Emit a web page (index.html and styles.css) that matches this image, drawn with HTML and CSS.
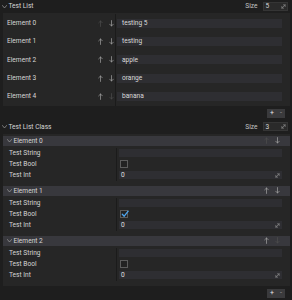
FILE: index.html
```html
<!DOCTYPE html>
<html lang="en">
<head>
    <meta charset="UTF-8">
    <title>Inspector - Test List</title>
    <link rel="stylesheet" href="styles.css">
</head>
<body>
    <div class="section-head">
        <svg class="chev" viewBox="0 0 6 4"><polyline points="0.5,0.5 3,3.5 5.5,0.5"/></svg>
        <span class="title">Test List</span>
        <span class="size-label">Size</span>
        <div class="size-box">
            <span>5</span>
            <svg class="resize" viewBox="0 0 6 6"><path d="M1 5 L5 1 M2.9 1 H5 V3.1 M1 2.9 V5 H3.1"/></svg>
        </div>
    </div>

    <div class="panel list">
        <div class="row">
            <div class="label"><span>Element 0</span>
                <span class="arrows">
                    <svg class="arrow dim" viewBox="0 0 6 8"><path d="M3 7.5 V1 M0.8 3.2 L3 1 L5.2 3.2"/></svg>
                    <svg class="arrow" viewBox="0 0 6 8"><path d="M3 0.5 V7 M0.8 4.8 L3 7 L5.2 4.8"/></svg>
                </span>
            </div>
            <div class="value"><div class="field">testing 5</div></div>
        </div>
        <div class="row">
            <div class="label"><span>Element 1</span>
                <span class="arrows">
                    <svg class="arrow" viewBox="0 0 6 8"><path d="M3 7.5 V1 M0.8 3.2 L3 1 L5.2 3.2"/></svg>
                    <svg class="arrow" viewBox="0 0 6 8"><path d="M3 0.5 V7 M0.8 4.8 L3 7 L5.2 4.8"/></svg>
                </span>
            </div>
            <div class="value"><div class="field">testing</div></div>
        </div>
        <div class="row">
            <div class="label"><span>Element 2</span>
                <span class="arrows">
                    <svg class="arrow" viewBox="0 0 6 8"><path d="M3 7.5 V1 M0.8 3.2 L3 1 L5.2 3.2"/></svg>
                    <svg class="arrow" viewBox="0 0 6 8"><path d="M3 0.5 V7 M0.8 4.8 L3 7 L5.2 4.8"/></svg>
                </span>
            </div>
            <div class="value"><div class="field">apple</div></div>
        </div>
        <div class="row">
            <div class="label"><span>Element 3</span>
                <span class="arrows">
                    <svg class="arrow" viewBox="0 0 6 8"><path d="M3 7.5 V1 M0.8 3.2 L3 1 L5.2 3.2"/></svg>
                    <svg class="arrow" viewBox="0 0 6 8"><path d="M3 0.5 V7 M0.8 4.8 L3 7 L5.2 4.8"/></svg>
                </span>
            </div>
            <div class="value"><div class="field">orange</div></div>
        </div>
        <div class="row">
            <div class="label"><span>Element 4</span>
                <span class="arrows">
                    <svg class="arrow" viewBox="0 0 6 8"><path d="M3 7.5 V1 M0.8 3.2 L3 1 L5.2 3.2"/></svg>
                    <svg class="arrow dim" viewBox="0 0 6 8"><path d="M3 0.5 V7 M0.8 4.8 L3 7 L5.2 4.8"/></svg>
                </span>
            </div>
            <div class="value"><div class="field">banana</div></div>
        </div>
    </div>
    <div class="footer"><div class="addrem"><span class="plus">+</span><span class="minus">-</span></div></div>

    <div class="section-head tall">
        <svg class="chev" viewBox="0 0 6 4"><polyline points="0.5,0.5 3,3.5 5.5,0.5"/></svg>
        <span class="title">Test List Class</span>
        <span class="size-label">Size</span>
        <div class="size-box">
            <span>3</span>
            <svg class="resize" viewBox="0 0 6 6"><path d="M1 5 L5 1 M2.9 1 H5 V3.1 M1 2.9 V5 H3.1"/></svg>
        </div>
    </div>

    <div class="panel classes">
        <div class="elem">
            <div class="elem-head">
                <svg class="chev" viewBox="0 0 6 4"><polyline points="0.5,0.5 3,3.5 5.5,0.5"/></svg>
                <span>Element 0</span>
                <span class="arrows">
                    <svg class="arrow dim" viewBox="0 0 6 8"><path d="M3 7.5 V1 M0.8 3.2 L3 1 L5.2 3.2"/></svg>
                    <svg class="arrow" viewBox="0 0 6 8"><path d="M3 0.5 V7 M0.8 4.8 L3 7 L5.2 4.8"/></svg>
                </span>
            </div>
            <div class="elem-body">
                <div class="prop"><div class="plabel">Test String</div><div class="pval"><div class="field"></div></div></div>
                <div class="prop"><div class="plabel">Test Bool</div><div class="pval"><span class="check"></span></div></div>
                <div class="prop"><div class="plabel">Test Int</div><div class="pval"><div class="field int"><span>0</span><svg class="resize" viewBox="0 0 6 6"><path d="M1 5 L5 1 M2.9 1 H5 V3.1 M1 2.9 V5 H3.1"/></svg></div></div></div>
            </div>
        </div>
        <div class="elem">
            <div class="elem-head">
                <svg class="chev" viewBox="0 0 6 4"><polyline points="0.5,0.5 3,3.5 5.5,0.5"/></svg>
                <span>Element 1</span>
                <span class="arrows">
                    <svg class="arrow" viewBox="0 0 6 8"><path d="M3 7.5 V1 M0.8 3.2 L3 1 L5.2 3.2"/></svg>
                    <svg class="arrow" viewBox="0 0 6 8"><path d="M3 0.5 V7 M0.8 4.8 L3 7 L5.2 4.8"/></svg>
                </span>
            </div>
            <div class="elem-body">
                <div class="prop"><div class="plabel">Test String</div><div class="pval"><div class="field"></div></div></div>
                <div class="prop"><div class="plabel">Test Bool</div><div class="pval"><span class="check on"><svg viewBox="0 0 8 8"><polyline points="1.3,4.2 3.2,6.2 7.2,1.2"/></svg></span></div></div>
                <div class="prop"><div class="plabel">Test Int</div><div class="pval"><div class="field int"><span>0</span><svg class="resize" viewBox="0 0 6 6"><path d="M1 5 L5 1 M2.9 1 H5 V3.1 M1 2.9 V5 H3.1"/></svg></div></div></div>
            </div>
        </div>
        <div class="elem">
            <div class="elem-head">
                <svg class="chev" viewBox="0 0 6 4"><polyline points="0.5,0.5 3,3.5 5.5,0.5"/></svg>
                <span>Element 2</span>
                <span class="arrows">
                    <svg class="arrow" viewBox="0 0 6 8"><path d="M3 7.5 V1 M0.8 3.2 L3 1 L5.2 3.2"/></svg>
                    <svg class="arrow dim" viewBox="0 0 6 8"><path d="M3 0.5 V7 M0.8 4.8 L3 7 L5.2 4.8"/></svg>
                </span>
            </div>
            <div class="elem-body">
                <div class="prop"><div class="plabel">Test String</div><div class="pval"><div class="field"></div></div></div>
                <div class="prop"><div class="plabel">Test Bool</div><div class="pval"><span class="check"></span></div></div>
                <div class="prop"><div class="plabel">Test Int</div><div class="pval"><div class="field int"><span>0</span><svg class="resize" viewBox="0 0 6 6"><path d="M1 5 L5 1 M2.9 1 H5 V3.1 M1 2.9 V5 H3.1"/></svg></div></div></div>
            </div>
        </div>
    </div>
    <div class="footer"><div class="addrem"><span class="plus">+</span><span class="minus">-</span></div></div>
</body>
</html>
```

FILE: styles.css
```css
body { margin: 0; background-color: #1e1e1e; color: #d6d6d6; font-family: Roboto, "Liberation Sans", sans-serif; font-size: 6.6px; line-height: 1; }
svg { display: block; fill: none; stroke-linecap: round; stroke-linejoin: round; }

/* section headers */
.section-head { height: 13px; display: flex; align-items: center; padding: 0 4px 0 2px; }
.section-head.tall { height: 14px; }
.chev { width: 5px; height: 3.5px; stroke: #a8a8a8; stroke-width: 0.8; }
.title { margin-left: 1.5px; }
.size-label { margin-left: auto; margin-right: 5px; color: #c4c4c4; }
.size-box { width: 20px; height: 7px; background-color: #2a2a2a; border: 1px solid #353535; display: flex; align-items: center; justify-content: space-between; padding: 0 1.5px 0 2px; }
.resize { width: 5px; height: 5px; stroke: #9a9a9a; stroke-width: 0.7; }

/* panels */
.panel { margin: 0 2px 0 3px; background-color: #262626; }
.panel.list { padding-top: 1px; }
.panel.classes { padding-top: 2px; }

.row { height: 18.4px; display: flex; }
.label { width: 113px; box-sizing: border-box; border-right: 1px solid #1b1b1b; display: flex; align-items: center; padding-left: 4px; }
.arrows { margin-left: auto; display: flex; gap: 6px; padding-right: 1px; }
.arrow { width: 5px; height: 7px; stroke: #a9a9a9; stroke-width: 0.8; }
.arrow.dim { stroke: #4f4f4f; }
.value { flex: 1; display: flex; align-items: center; padding: 0 8px 0 1px; }
.field { flex: 1; height: 9px; background-color: #2e2e32; display: flex; align-items: center; padding-left: 5px; color: #dadada; }

.footer { height: 14px; display: flex; justify-content: flex-end; align-items: flex-start; padding-right: 7px; }
.addrem { margin-top: 3.5px; width: 18px; height: 9px; background-color: #3a3a3c; display: flex; align-items: center; justify-content: space-around; font-size: 7px; }
.plus { color: #e6e6e6; }
.minus { color: #9a9a9a; }

/* class list elements */
.elem-head { height: 10px; background-color: #38383d; display: flex; align-items: center; padding: 0 9px 0 4px; }
.elem-head span:first-of-type { margin-left: 1.5px; }
.elem-body { padding: 2px 0 5px; }
.prop { height: 11px; display: flex; }
.plabel { width: 114px; box-sizing: border-box; padding-left: 6px; border-right: 1px solid #1b1b1b; display: flex; align-items: center; }
.pval { flex: 1; display: flex; align-items: center; padding: 0 8px 0 2px; }
.prop .field { height: 8px; padding-left: 2px; }
.field.int { justify-content: space-between; padding-right: 2px; color: #e0e0e0; }
.check { width: 6px; height: 6px; border: 1px solid #5c5c5c; background-color: #222; margin-left: 1px; position: relative; }
.check.on svg { position: absolute; left: -0.5px; top: -1.5px; width: 8px; height: 8px; stroke: #4da6f2; stroke-width: 1.3; }
```
